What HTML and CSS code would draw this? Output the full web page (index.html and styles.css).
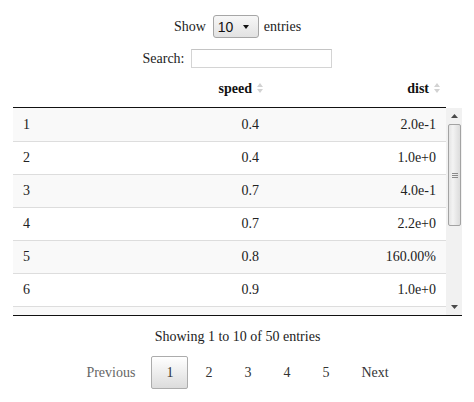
FILE: index.html
```html
<!DOCTYPE html>
<html lang="en">
<head>
  <meta charset="UTF-8">
  <title>cars table</title>
  <link rel="stylesheet" href="styles.css">
</head>
<body>
  <div class="wrapper">
    <div class="length">
      <label>Show
        <span class="select-wrap">
          <select>
            <option>10</option>
            <option>25</option>
            <option>50</option>
            <option>100</option>
          </select>
        </span>
        entries</label>
    </div>

    <div class="filter">
      <label>Search: <input type="search"></label>
    </div>

    <div class="scroll">
      <div class="scroll-head">
        <table>
          <colgroup><col class="c1"><col class="c2"><col class="c3"></colgroup>
          <thead>
            <tr>
              <th></th>
              <th class="num">speed<svg class="sort" width="6" height="12" viewBox="0 0 6 12"><path d="M0 5L3 1L6 5Z"/><path d="M0 7L3 11L6 7Z"/></svg></th>
              <th class="num">dist<svg class="sort" width="6" height="12" viewBox="0 0 6 12"><path d="M0 5L3 1L6 5Z"/><path d="M0 7L3 11L6 7Z"/></svg></th>
            </tr>
          </thead>
        </table>
      </div>

      <div class="scroll-body">
        <div class="body-view">
          <table>
            <colgroup><col class="c1"><col class="c2"><col class="c3"></colgroup>
            <tbody>
              <tr class="odd"><td>1</td><td class="num">0.4</td><td class="num">2.0e-1</td></tr>
              <tr><td>2</td><td class="num">0.4</td><td class="num">1.0e+0</td></tr>
              <tr class="odd"><td>3</td><td class="num">0.7</td><td class="num">4.0e-1</td></tr>
              <tr><td>4</td><td class="num">0.7</td><td class="num">2.2e+0</td></tr>
              <tr class="odd"><td>5</td><td class="num">0.8</td><td class="num">160.00%</td></tr>
              <tr><td>6</td><td class="num">0.9</td><td class="num">1.0e+0</td></tr>
              <tr class="odd"><td>&nbsp;</td><td class="num"></td><td class="num"></td></tr>
            </tbody>
          </table>
        </div>

        <div class="scrollbar">
          <div class="sb-btn"><svg width="7" height="4" viewBox="0 0 7 4"><path d="M0 4L3.5 0L7 4Z"/></svg></div>
          <div class="sb-track">
            <div class="sb-thumb">
              <div class="grip"><i></i><i></i><i></i></div>
            </div>
          </div>
          <div class="sb-btn"><svg width="7" height="4" viewBox="0 0 7 4"><path d="M0 0L3.5 4L7 0Z"/></svg></div>
        </div>
      </div>
    </div>

    <div class="info">Showing 1 to 10 of 50 entries</div>

    <div class="paginate">
      <a class="btn disabled">Previous</a>
      <a class="btn current">1</a>
      <a class="btn">2</a>
      <a class="btn">3</a>
      <a class="btn">4</a>
      <a class="btn">5</a>
      <a class="btn">Next</a>
    </div>
  </div>
</body>
</html>
```

FILE: styles.css
```css
body {
  margin: 0;
  font-family: "Liberation Serif", serif;
  font-size: 14px;
  color: #222;
  background: #fff;
}

.wrapper {
  padding: 15px 12px 0 13px;
}

.length,
.filter {
  display: flex;
  justify-content: center;
}

.length label,
.filter label {
  display: flex;
  align-items: center;
}

.select-wrap {
  position: relative;
  display: inline-block;
  margin: 0 5px 0 7px;
}

.select-wrap select {
  appearance: none;
  -webkit-appearance: none;
  width: 46px;
  height: 23px;
  padding: 0 0 0 4px;
  font-family: "Liberation Sans", Arial, sans-serif;
  font-size: 14px;
  color: #111;
  border: 1px solid #a6a6a6;
  border-radius: 3px;
  background: linear-gradient(#f7f7f7, #e2e2e2);
}

.select-wrap::after {
  content: "";
  position: absolute;
  right: 10px;
  top: 10px;
  border-left: 3.5px solid transparent;
  border-right: 3.5px solid transparent;
  border-top: 4px solid #111;
  pointer-events: none;
}

.filter {
  margin-top: 11px;
}

.filter input {
  width: 141px;
  height: 19px;
  box-sizing: border-box;
  margin-left: 7px;
  border: 1px solid #d4d4d4;
  border-top-color: #c4c4c4;
}

.scroll {
  margin-top: 3px;
}

table {
  border-collapse: collapse;
  table-layout: fixed;
  width: 433px;
  font-family: "Liberation Serif", serif;
  font-size: 14px;
}

.c1 { width: 128px; }
.c2 { width: 128px; }
.c3 { width: 177px; }

.scroll-head table {
  border-bottom: 1px solid #111;
}

th {
  padding: 10px 6px 10px 10px;
  font-weight: bold;
  color: #111;
  text-align: left;
}

th.num {
  text-align: right;
}

.sort {
  fill: #d2d2d2;
  margin-left: 5px;
  vertical-align: -1px;
}

.scroll-body {
  display: flex;
  border-bottom: 1px solid #111;
}

.body-view {
  width: 433px;
  height: 207px;
  overflow: hidden;
}

td {
  padding: 8px 10px;
  border-top: 1px solid #ddd;
}

tr:first-child td {
  border-top: none;
  padding-top: 9px;
}

td.num {
  text-align: right;
}

tr.odd {
  background: #f9f9f9;
}

.scrollbar {
  width: 16px;
  display: flex;
  flex-direction: column;
  background: #f1f1f1;
}

.sb-btn {
  height: 16px;
  display: flex;
  align-items: center;
  justify-content: center;
  fill: #4a4a4a;
}

.sb-track {
  flex: 1;
}

.sb-thumb {
  height: 100px;
  margin: 0 1px 0 2px;
  border: 1px solid #a3a3a3;
  border-radius: 2px;
  background: linear-gradient(to right, #e4e4e4, #f3f3f3 35%, #dcdcdc);
  display: flex;
  align-items: center;
  justify-content: center;
}

.grip i {
  display: block;
  width: 6px;
  height: 1px;
  margin: 1px 0;
  background: #8a8a8a;
}

.info {
  padding-top: 13px;
  text-align: center;
  color: #222;
}

.paginate {
  display: flex;
  justify-content: center;
  margin-top: 11px;
}

.btn {
  box-sizing: border-box;
  min-width: 21px;
  padding: 7px 14px;
  line-height: 17px;
  margin-left: 2px;
  border: 1px solid transparent;
  border-radius: 2px;
  color: #333;
  text-align: center;
  cursor: pointer;
}

.btn.disabled {
  color: #666;
  cursor: default;
  padding: 7px 13px 7px 12px;
}

.btn.current {
  border-color: #acacac;
  background: linear-gradient(#fff, #dcdcdc);
}
```
